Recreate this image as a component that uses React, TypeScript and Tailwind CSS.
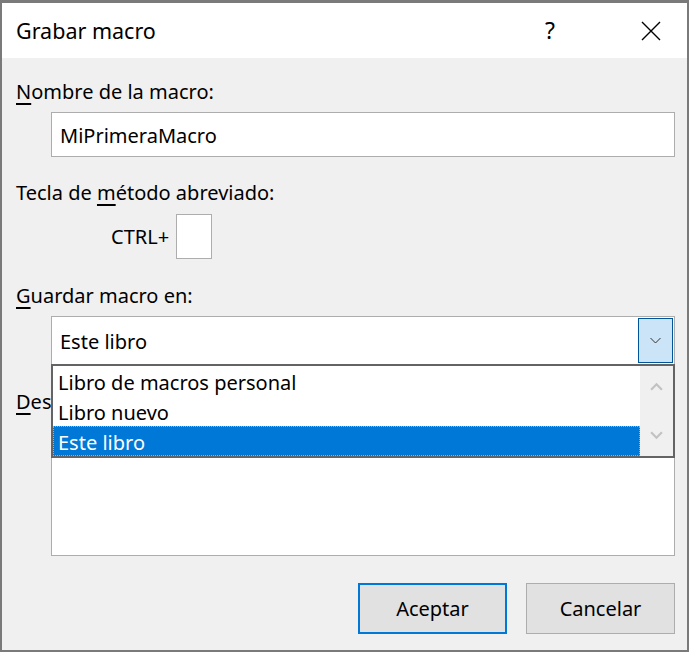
import React from 'react';

const font = { fontFamily: '"Noto Sans", "Segoe UI", sans-serif' };

function Chevron({ up = false, className = '', width = 1 }: { up?: boolean; className?: string; width?: number }) {
  return (
    <svg viewBox="0 0 12 8" className={className} fill="none" stroke="currentColor" strokeWidth={width}>
      <path d={up ? 'M1 7 L6 2 L11 7' : 'M1 1 L6 6 L11 1'} />
    </svg>
  );
}

export default function App() {
  return (
    <div className="w-[689px] h-[652px] bg-white text-[#000] text-[20px] leading-none" style={font}>
      <div className="w-full h-full border-x-2 border-b-2 border-t-[3px] border-[#7a7a7a] bg-[#f0f0f0] flex flex-col">
        {/* Title bar */}
        <div className="h-[55px] bg-white flex items-center pl-[14px] pr-[26px] shrink-0">
          <span className="text-[21.5px] flex-1">Grabar macro</span>
          <span className="text-[23px] mr-[86px]">?</span>
          <svg viewBox="0 0 20 20" className="w-[20px] h-[20px]" stroke="#000" strokeWidth="1.4">
            <path d="M1 1 L19 19 M19 1 L1 19" />
          </svg>
        </div>

        {/* Body */}
        <div className="relative flex-1 pl-[14px] pr-[12px] flex flex-col">
          <div className="mt-[24px] h-[20px] flex items-center">
            <span><span className="underline underline-offset-4">N</span>ombre de la macro:</span>
          </div>
          <div className="ml-[35px] mt-[10px] h-[45px] bg-white border border-[#adadad] flex items-center pl-[8px] pt-[2px]">
            MiPrimeraMacro
          </div>

          <div className="mt-[26px] h-[20px] flex items-center">
            <span>Tecla de <span className="underline underline-offset-4">m</span>étodo abreviado:</span>
          </div>
          <div className="mt-[11px] flex items-center ml-[95px]">
            <span className="mr-[7px]">CTRL+</span>
            <div className="w-[36px] h-[45px] bg-white border border-[#adadad]" />
          </div>

          <div className="mt-[27px] h-[20px] flex items-center">
            <span><span className="underline underline-offset-4">G</span>uardar macro en:</span>
          </div>
          <div className="ml-[35px] mt-[10px] h-[49px] bg-white border border-[#adadad] flex items-center pl-[8px] relative">
            <span className="flex-1 pt-[3px]">Este libro</span>
            <div className="w-[35px] h-[45px] mr-[1px] bg-[#cce4f7] border border-[#005499] flex items-center justify-center text-[#333]">
              <Chevron className="w-[13px] h-[8px]" />
            </div>
            {/* Open dropdown list */}
            <div className="absolute left-[-1px] right-[-1px] top-[47px] h-[94px] bg-white border-2 border-[#646464] flex z-10">
              <div className="flex-1 flex flex-col">
                <div className="h-[30px] flex items-center pl-[5px] pt-[3px]">Libro de macros personal</div>
                <div className="h-[30px] flex items-center pl-[5px] pt-[3px]">Libro nuevo</div>
                <div className="h-[30px] flex items-center pl-[4px] pt-[3px] bg-[#0078d7] text-white border border-dotted border-[#e0a050]">Este libro</div>
              </div>
              <div className="w-[33px] bg-[#f0f0f0] flex flex-col items-center justify-between py-[16px] text-[#c2c2c2]">
                <Chevron up className="w-[13px] h-[9px]" width={2} />
                <Chevron className="w-[13px] h-[9px]" width={2} />
              </div>
            </div>
          </div>

          <div className="mt-[27px] h-[20px] flex items-center">
            <span><span className="underline underline-offset-4">D</span>escripción:</span>
          </div>
          <div className="ml-[35px] mt-[10px] h-[134px] bg-white border border-[#adadad]" />

          <div className="mt-[27px] flex justify-end gap-[19px]">
            <button className="w-[149px] h-[51px] bg-[#e1e1e1] border-2 border-[#0078d7] text-[20px]" style={font}>Aceptar</button>
            <button className="w-[149px] h-[51px] bg-[#e1e1e1] border border-[#adadad] text-[20px]" style={font}>Cancelar</button>
          </div>
        </div>
      </div>
    </div>
  );
}
